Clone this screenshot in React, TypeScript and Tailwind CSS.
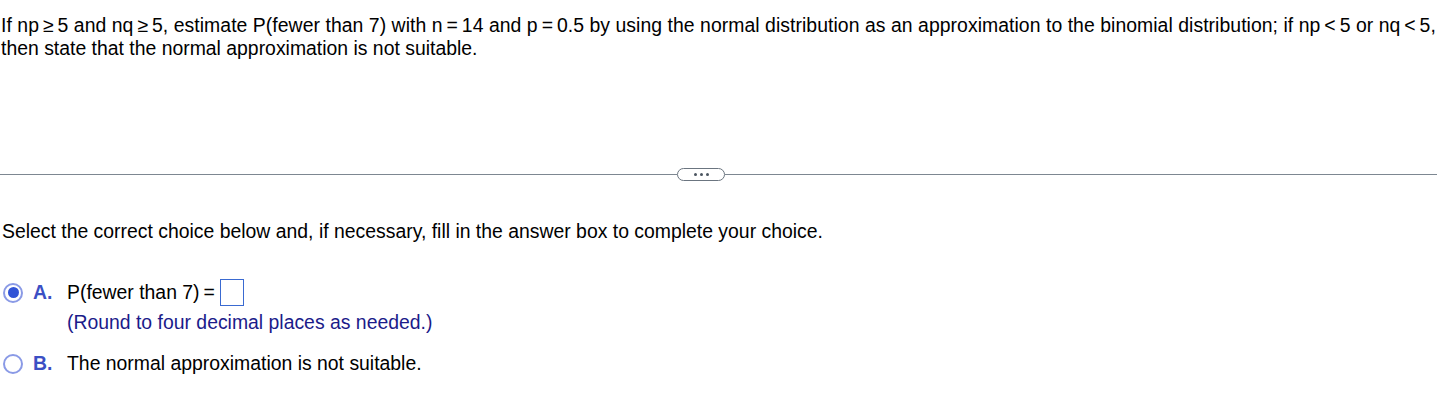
export default function App() {
  return (
    <div className="w-[1438px] h-[408px] bg-white text-[19.4px] text-black font-['Liberation_Sans',Arial,sans-serif]">
      <div className="pt-[14px] pl-[1px] leading-[23px]">
        <p className="whitespace-nowrap tracking-[0.05px]">
          If np{"\u2009"}≥{"\u2009"}5 and nq{"\u2009"}≥{"\u2009"}5, estimate P(fewer than 7) with n{"\u2009"}={"\u2009"}14 and p{"\u2009"}={"\u2009"}0.5 by using the normal distribution as an approximation to the binomial distribution; if np{"\u2009"}&lt;{"\u2009"}5 or nq{"\u2009"}&lt;{"\u2009"}5,
        </p>
        <p>then state that the normal approximation is not suitable.</p>
      </div>

      <div className="mt-[108px] flex items-center w-[1437px]">
        <div className="w-[677px] h-px bg-[#7d8791]" />
        <div className="w-[48px] h-[13px] rounded-full border border-[#6b7580] flex items-center justify-center gap-[3px]">
          <span className="w-[3px] h-[3px] rounded-full bg-[#4b5560]" />
          <span className="w-[3px] h-[3px] rounded-full bg-[#4b5560]" />
          <span className="w-[3px] h-[3px] rounded-full bg-[#4b5560]" />
        </div>
        <div className="flex-1 h-px bg-[#7d8791]" />
      </div>

      <p className="mt-[39px] pl-[2px] leading-[23px]">
        Select the correct choice below and, if necessary, fill in the answer box to complete your choice.
      </p>

      <div className="mt-[36px] flex flex-col">
        <div className="flex items-start">
          <div className="w-[33px] h-[27px] flex items-center pl-[3px]">
            <span className="w-[20px] h-[20px] rounded-full border-2 border-[#8a9ae6] flex items-center justify-center">
              <span className="w-[11px] h-[11px] rounded-full bg-[#3153d6]" />
            </span>
          </div>
          <span className="w-[34px] h-[27px] flex items-center font-bold text-[#3b4fc4]">A.</span>
          <div className="flex flex-col">
            <div className="h-[27px] flex items-center">
              <span>P(fewer than 7){"\u2009"}=</span>
              <span className="ml-[5px] w-[24px] h-[27px] border-[1.5px] border-[#3a6ad1]" />
            </div>
            <span className="mt-[5px] leading-[23px] text-[#1b1b8a]">(Round to four decimal places as needed.)</span>
          </div>
        </div>
        <div className="mt-[18px] flex items-center h-[24px]">
          <div className="w-[33px] flex items-center pl-[3px]">
            <span className="w-[20px] h-[20px] rounded-full border-2 border-[#8a9ae6]" />
          </div>
          <span className="w-[34px] font-bold text-[#3b4fc4]">B.</span>
          <span>The normal approximation is not suitable.</span>
        </div>
      </div>
    </div>
  );
}
